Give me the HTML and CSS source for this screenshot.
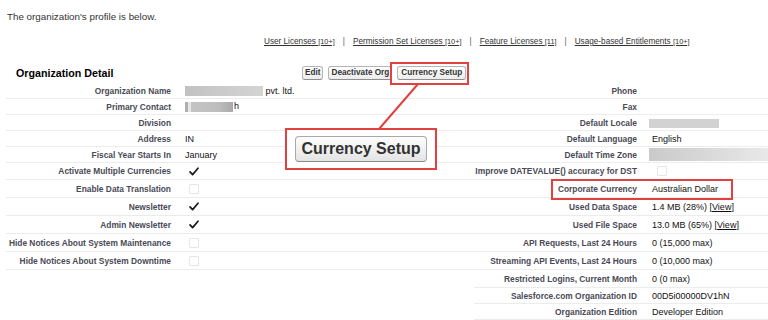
FILE: index.html
```html
<!DOCTYPE html>
<html lang="en">
  <head>
    <meta charset="UTF-8" />
    <title>Company Information</title>
    <link rel="stylesheet" href="styles.css">
  </head>
  <body>
    <div class="page">
      <p class="intro">The organization's profile is below.</p>

      <div class="links">
        <a href="#">User Licenses <span class="cnt">[10+]</span></a><span class="sep">|</span><a href="#">Permission Set Licenses <span class="cnt">[10+]</span></a><span class="sep">|</span><a href="#">Feature Licenses <span class="cnt">[11]</span></a><span class="sep">|</span><a href="#">Usage-based Entitlements <span class="cnt">[10+]</span></a>
      </div>

      <div class="head">
        <h2 class="head-title">Organization Detail</h2>
        <button class="btn">Edit</button>
        <button class="btn">Deactivate Org</button>
        <span class="mark-small"><button class="btn">Currency Setup</button></span>
      </div>

      <table class="detail">
        <colgroup>
          <col class="c-lbl" />
          <col class="c-val" />
          <col class="c-lbl2" />
          <col class="c-val2" />
        </colgroup>
        <tr class="r-first">
          <td class="lbl">Organization Name</td>
          <td class="val"><span class="blur blur-name"></span> pvt. ltd.</td>
          <td class="lbl">Phone</td>
          <td class="val"></td>
        </tr>
        <tr class="r-txt">
          <td class="lbl">Primary Contact</td>
          <td class="val"><span class="blur blur-contact"></span>h</td>
          <td class="lbl">Fax</td>
          <td class="val"></td>
        </tr>
        <tr class="r-txt">
          <td class="lbl">Division</td>
          <td class="val"></td>
          <td class="lbl">Default Locale</td>
          <td class="val"><span class="blur blur-locale"></span></td>
        </tr>
        <tr class="r-txt">
          <td class="lbl">Address</td>
          <td class="val">IN</td>
          <td class="lbl">Default Language</td>
          <td class="val">English</td>
        </tr>
        <tr class="r-txt">
          <td class="lbl">Fiscal Year Starts In</td>
          <td class="val">January</td>
          <td class="lbl">Default Time Zone</td>
          <td class="val"><span class="blur blur-tz"></span></td>
        </tr>
        <tr class="r-mid">
          <td class="lbl">Activate Multiple Currencies</td>
          <td class="val"><svg class="check" width="10" height="9" viewBox="0 0 10 9"><path d="M1 4.8 L3.6 7.6 L9 1.2" fill="none" stroke="#1a1a1a" stroke-width="1.7" stroke-linecap="round" stroke-linejoin="round"/></svg></td>
          <td class="lbl">Improve DATEVALUE() accuracy for DST</td>
          <td class="val"><span class="cbox"></span></td>
        </tr>
        <tr class="r-chk">
          <td class="lbl">Enable Data Translation</td>
          <td class="val"><span class="cbox"></span></td>
          <td class="lbl">Corporate Currency</td>
          <td class="val">Australian Dollar</td>
        </tr>
        <tr class="r-chk">
          <td class="lbl">Newsletter</td>
          <td class="val"><svg class="check" width="10" height="9" viewBox="0 0 10 9"><path d="M1 4.8 L3.6 7.6 L9 1.2" fill="none" stroke="#1a1a1a" stroke-width="1.7" stroke-linecap="round" stroke-linejoin="round"/></svg></td>
          <td class="lbl">Used Data Space</td>
          <td class="val">1.4 MB (28%) [<a href="#">View</a>]</td>
        </tr>
        <tr class="r-chk">
          <td class="lbl">Admin Newsletter</td>
          <td class="val"><svg class="check" width="10" height="9" viewBox="0 0 10 9"><path d="M1 4.8 L3.6 7.6 L9 1.2" fill="none" stroke="#1a1a1a" stroke-width="1.7" stroke-linecap="round" stroke-linejoin="round"/></svg></td>
          <td class="lbl">Used File Space</td>
          <td class="val">13.0 MB (65%) [<a href="#">View</a>]</td>
        </tr>
        <tr class="r-chk">
          <td class="lbl">Hide Notices About System Maintenance</td>
          <td class="val"><span class="cbox"></span></td>
          <td class="lbl">API Requests, Last 24 Hours</td>
          <td class="val">0 (15,000 max)</td>
        </tr>
        <tr class="r-chk">
          <td class="lbl">Hide Notices About System Downtime</td>
          <td class="val"><span class="cbox"></span></td>
          <td class="lbl">Streaming API Events, Last 24 Hours</td>
          <td class="val">0 (10,000 max)</td>
        </tr>
        <tr class="r-chk">
          <td class="empty"></td>
          <td class="empty"></td>
          <td class="lbl">Restricted Logins, Current Month</td>
          <td class="val">0 (0 max)</td>
        </tr>
        <tr class="r-txt">
          <td class="empty"></td>
          <td class="empty"></td>
          <td class="lbl">Salesforce.com Organization ID</td>
          <td class="val">00D5i00000DV1hN</td>
        </tr>
        <tr class="r-txt">
          <td class="empty"></td>
          <td class="empty"></td>
          <td class="lbl">Organization Edition</td>
          <td class="val">Developer Edition</td>
        </tr>
      </table>

      <!-- annotations drawn over the screenshot -->
      <svg class="pointer" width="768" height="320" viewBox="0 0 768 320">
        <line x1="418" y1="84" x2="379" y2="129" stroke="#e3403f" stroke-width="2" />
      </svg>
      <div class="mark-big"><span class="btn-big">Currency Setup</span></div>
      <div class="mark-currency"></div>
    </div>
  </body>
</html>
```

FILE: styles.css
```css
body {
  margin: 0;
  background: #fff;
  color: #000;
  font-family: "Liberation Sans", Arial, sans-serif;
}
.page {
  position: relative;
  width: 768px;
  height: 320px;
  overflow: hidden;
}
.intro {
  margin: 0;
  padding: 11px 0 0 7px;
  font-size: 9.8px;
  line-height: 12px;
  color: #333;
}
.links {
  padding: 14px 0 0 264px;
  font-size: 8.2px;
  line-height: 10px;
  color: #333;
  white-space: nowrap;
}
.links a {
  color: #333;
  text-decoration: underline;
}
.links .cnt {
  font-size: 7.4px;
}
.links .sep {
  padding: 0 8px;
  color: #555;
}

/* header with buttons */
.head {
  display: flex;
  align-items: center;
  height: 22px;
  margin-top: 15px;
  padding-left: 16px;
}
.head-title {
  width: 286px;
  margin: 0;
  font-size: 10.7px;
  font-weight: bold;
  color: #000;
}
.btn {
  height: 14px;
  margin-right: 5px;
  padding: 0 2px;
  font-family: "Liberation Sans", Arial, sans-serif;
  font-size: 8.2px;
  font-weight: bold;
  color: #333;
  background: linear-gradient(#ffffff, #ececec);
  border: 1px solid #b5b5b5;
  border-bottom-color: #8f8f8f;
  border-radius: 3px;
  line-height: 12px;
}
.mark-small {
  position: relative;
  display: inline-flex;
  align-items: center;
  height: 19px;
  margin-left: -7px;
  padding: 0 1px 0 5px;
  background: #fff;
  border: 2px solid #e3403f;
}
.mark-small .btn {
  margin: 0;
  padding: 0 3px;
}

/* detail table */
.detail {
  margin-left: 6px;
  width: 762px;
  table-layout: fixed;
  border-collapse: collapse;
}
.c-lbl { width: 172px; }
.c-val { width: 296px; }
.c-lbl2 { width: 170px; }
.c-val2 { width: 124px; }
.detail td {
  padding: 0;
  border-bottom: 1px solid #ececec;
  white-space: nowrap;
  overflow: hidden;
  vertical-align: middle;
}
.detail td.empty {
  border-bottom: 0;
}
.detail .lbl {
  padding-right: 7px;
  text-align: right;
  font-size: 8.4px;
  font-weight: bold;
  color: #4a4a56;
}
.detail .val {
  padding-left: 7px;
  font-size: 9px;
  color: #111;
}
.detail td:nth-child(3) {
  padding-right: 7px;
}
.detail td:nth-child(4) {
  padding-left: 8px;
}
.detail .val a {
  color: #111;
  text-decoration: underline;
}
.r-first td { height: 14px; }
.r-txt td { height: 15px; }
.r-mid td { height: 16px; }
.r-chk td { height: 17px; }

.check {
  display: block;
  margin-left: 4px;
}
.cbox {
  display: block;
  width: 8px;
  height: 8px;
  margin-left: 4px;
  border: 1px solid #e6e6e6;
  border-radius: 1px;
}
.detail td:nth-child(4) .cbox {
  margin-left: 5px;
}
.blur {
  display: inline-block;
  height: 10px;
  vertical-align: middle;
  background: linear-gradient(90deg, #c2c2c2, #d4d4d4);
}
.blur-name {
  width: 78px;
}
.blur-contact {
  width: 48px;
  margin-right: 1px;
  background: linear-gradient(90deg, #b0b0b0 0, #b0b0b0 3px, #e6e6e6 3px, #e6e6e6 6px, #c4c4c4 6px, #bdbdbd 70%, #a9a9a9);
}
.blur-locale {
  width: 70px;
  height: 9px;
  margin-left: -3px;
  background: #d2d2d2;
}
.blur-tz {
  width: 120px;
  height: 13px;
  margin-left: -3px;
  background: linear-gradient(90deg, #cacaca, #dcdcdc 60%, #e9e9e9);
}

/* annotations */
.pointer {
  position: absolute;
  left: 0;
  top: 0;
  pointer-events: none;
}
.mark-big {
  position: absolute;
  left: 285px;
  top: 128px;
  width: 148px;
  height: 38px;
  display: flex;
  align-items: center;
  justify-content: center;
  background: #fff;
  border: 2px solid #e3403f;
}
.btn-big {
  display: block;
  height: 24px;
  padding: 0 5px;
  font-size: 16px;
  font-weight: bold;
  line-height: 24px;
  color: #333;
  background: linear-gradient(#fdfdfd, #e4e4e4);
  border: 1px solid #a9a9a9;
  border-bottom-color: #8a8a8a;
  border-radius: 4px;
}
.mark-currency {
  position: absolute;
  left: 551px;
  top: 179px;
  width: 178px;
  height: 17px;
  border: 2px solid #e3403f;
}
```
